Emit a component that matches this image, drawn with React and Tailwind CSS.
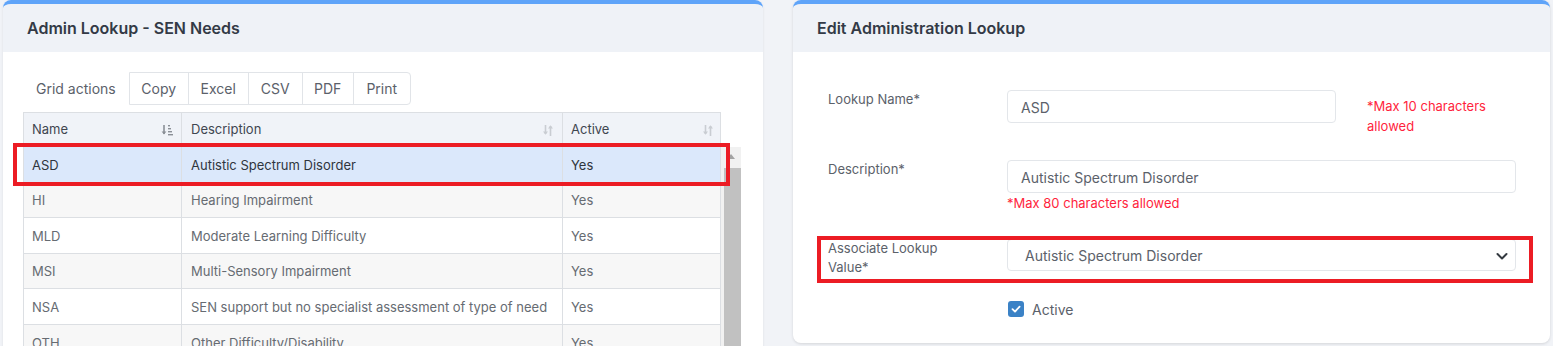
import React from "react";

const rows = [
  ["ASD", "Autistic Spectrum Disorder", "Yes"],
  ["HI", "Hearing Impairment", "Yes"],
  ["MLD", "Moderate Learning Difficulty", "Yes"],
  ["MSI", "Multi-Sensory Impairment", "Yes"],
  ["NSA", "SEN support but no specialist assessment of type of need", "Yes"],
  ["OTH", "Other Difficulty/Disability", "Yes"],
  ["PD", "Physical Disability", "Yes"],
];

function SortedIcon() {
  return (
    <svg width="12" height="12" viewBox="0 0 12 12" className="text-[#8a8f96]">
      <path d="M3 1v9" stroke="currentColor" strokeWidth="1.6" />
      <path d="M0.6 7.5L3 10.6L5.4 7.5Z" fill="currentColor" />
      <rect x="7" y="1" width="2" height="1.4" fill="currentColor" />
      <rect x="7" y="4" width="3" height="1.4" fill="currentColor" />
      <rect x="7" y="7" width="4" height="1.4" fill="currentColor" />
      <rect x="7" y="10" width="5" height="1.4" fill="currentColor" />
    </svg>
  );
}

function SortIcon() {
  return (
    <svg width="12" height="12" viewBox="0 0 12 12" className="text-[#c9cdd2]">
      <path d="M3.5 1v9" stroke="currentColor" strokeWidth="1.6" />
      <path d="M1 7.5L3.5 10.8L6 7.5Z" fill="currentColor" />
      <path d="M8.5 2v10" stroke="currentColor" strokeWidth="1.6" />
      <path d="M6 4.5L8.5 1.2L11 4.5Z" fill="currentColor" />
    </svg>
  );
}

function CardHeader({ title }) {
  return (
    <div className="h-[52px] rounded-t-[8px] border-t-4 border-[#5fa4f9] bg-[#eff2f7] flex items-center px-[24px]">
      <span className="text-[16px] font-semibold text-[#333a46]">{title}</span>
    </div>
  );
}

export default function App() {
  return (
    <div
      className="h-[346px] overflow-hidden bg-[#f1f3f7] flex gap-[30px] px-[3px]"
      style={{ fontFamily: "Inter, 'Noto Sans', sans-serif" }}
    >
      {/* Left card */}
      <div className="w-[760px] shrink-0 bg-white rounded-t-[8px] shadow-[0_1px_3px_rgba(0,0,0,0.08)] h-[420px]">
        <CardHeader title="Admin Lookup - SEN Needs" />
        <div className="pt-[20px] px-[20px]">
          <div className="flex h-[33px] text-[14px] text-[#5b616a]">
            <div className="px-[13px] flex items-center">Grid actions</div>
            <div className="flex border border-[#e1e4e8] rounded-r-[4px]">
              <div className="w-[59px] flex items-center justify-center border-r border-[#e1e4e8]">Copy</div>
              <div className="w-[60px] flex items-center justify-center border-r border-[#e1e4e8]">Excel</div>
              <div className="w-[54px] flex items-center justify-center border-r border-[#e1e4e8]">CSV</div>
              <div className="w-[51px] flex items-center justify-center border-r border-[#e1e4e8]">PDF</div>
              <div className="w-[56px] flex items-center justify-center">Print</div>
            </div>
          </div>

          <div className="mt-[7px] w-[718px] text-[13px]">
            {/* header */}
            <div className="w-[698px] grid grid-cols-[158px_381px_159px] h-[35px] bg-[#f0f3f8] border border-[#dcdfe3] text-[#3f4650]">
              <div className="flex items-center justify-between pl-[8px] pr-[8px] pt-[1px] border-r border-[#dcdfe3]">
                <span>Name</span>
                <SortedIcon />
              </div>
              <div className="flex items-center justify-between pl-[9px] pr-[8px] pt-[1px] border-r border-[#dcdfe3]">
                <span>Description</span>
                <SortIcon />
              </div>
              <div className="flex items-center justify-between pl-[8px] pr-[8px] pt-[1px]">
                <span>Active</span>
                <SortIcon />
              </div>
            </div>
            {/* body with scrollbar */}
            <div className="flex">
              <div className="w-[698px] relative">
                {rows.map((r, i) => {
                  const selected = i === 0;
                  const bg = selected ? "bg-[#dbe8fb] text-[#2f353d]" : i % 2 === 1 ? "bg-[#f7f7f7] text-[#666b72]" : "bg-white text-[#666b72]";
                  return (
                    <div
                      key={r[0]}
                      className={`grid grid-cols-[158px_381px_159px] h-[35.6px] border-x border-b border-[#dcdfe3] ${bg}`}
                    >
                      <div className="flex items-center pl-[8px] pt-[2px] border-r border-[#dcdfe3]">{r[0]}</div>
                      <div className="flex items-center pl-[9px] pt-[2px] border-r border-[#dcdfe3] whitespace-nowrap">{r[1]}</div>
                      <div className="flex items-center pl-[8px] pt-[2px]">{r[2]}</div>
                    </div>
                  );
                })}
                <div className="absolute left-[-10px] top-[-4px] w-[717px] h-[43px] border-4 border-[#ec1c24] pointer-events-none"></div>
              </div>
              <div className="w-[20px] bg-[#f1f1f1] flex flex-col">
                <div className="h-[21px] flex items-start justify-center pt-[7px]">
                  <div className="w-0 h-0 border-x-[4px] border-x-transparent border-b-[5px] border-b-[#a3a3a3]"></div>
                </div>
                <div className="ml-[3px] w-[17px] h-[400px] bg-[#c1c1c1]"></div>
              </div>
            </div>
          </div>
        </div>
      </div>

      {/* Right card */}
      <div className="w-[757px] shrink-0 self-start bg-white rounded-[8px] shadow-[0_1px_3px_rgba(0,0,0,0.12)]">
        <CardHeader title="Edit Administration Lookup" />
        <div className="pt-[38px] pb-[26px] pl-[35px] text-[14px] text-[#5b616a]">
          {/* Row 1 */}
          <div className="flex h-[33px] items-start">
            <div className="w-[179px] text-[13px] leading-[19px]">Lookup Name*</div>
            <div className="w-[329px] h-[33px] border border-[#e3e6ea] rounded-[4px] flex items-center pl-[13px] pt-[1px]">ASD</div>
            <div className="ml-[31px] w-[150px] mt-[7px] text-[13px] leading-[19.5px] text-[#ff1f3d]">
              *Max 10 characters allowed
            </div>
          </div>
          {/* Row 2 */}
          <div className="flex mt-[37px]">
            <div className="w-[179px] text-[13px] leading-[19px]">Description*</div>
            <div className="flex flex-col">
              <div className="w-[509px] h-[33px] border border-[#e3e6ea] rounded-[4px] flex items-center pl-[13px] pt-[1px]">
                Autistic Spectrum Disorder
              </div>
              <div className="mt-[1px] text-[13px] leading-[19px] text-[#ff1f3d]">*Max 80 characters allowed</div>
            </div>
          </div>
          {/* Row 3 */}
          <div className="flex mt-[26px] h-[32px] items-start relative">
            <div className="w-[179px] text-[13px] leading-[19px]">
              Associate Lookup
              <br />
              Value*
            </div>
            <div className="w-[509px] h-[32px] border border-[#e3e6ea] rounded-[4px] flex items-center justify-between pl-[17px] pr-[5px] pt-[1px]">
              <span>Autistic Spectrum Disorder</span>
              <svg width="16" height="16" viewBox="0 0 16 16">
                <path d="M3.5 6l4.5 4.5L12.5 6" fill="none" stroke="#343a40" strokeWidth="2" strokeLinecap="round" strokeLinejoin="round" />
              </svg>
            </div>
            <div className="absolute left-[-11px] top-[-3px] w-[716px] h-[47px] border-4 border-[#ec1c24] pointer-events-none"></div>
          </div>
          {/* Row 4 */}
          <div className="flex mt-[30px] h-[16px] pl-[180px] items-center">
            <div className="w-[16px] h-[16px] rounded-[3px] bg-[#3b82c6] flex items-center justify-center">
              <svg width="12" height="12" viewBox="0 0 12 12">
                <path d="M2.5 6.2L5 8.6L9.6 3.6" fill="none" stroke="white" strokeWidth="1.8" strokeLinecap="round" strokeLinejoin="round" />
              </svg>
            </div>
            <span className="ml-[8px]">Active</span>
          </div>
        </div>
      </div>
    </div>
  );
}
